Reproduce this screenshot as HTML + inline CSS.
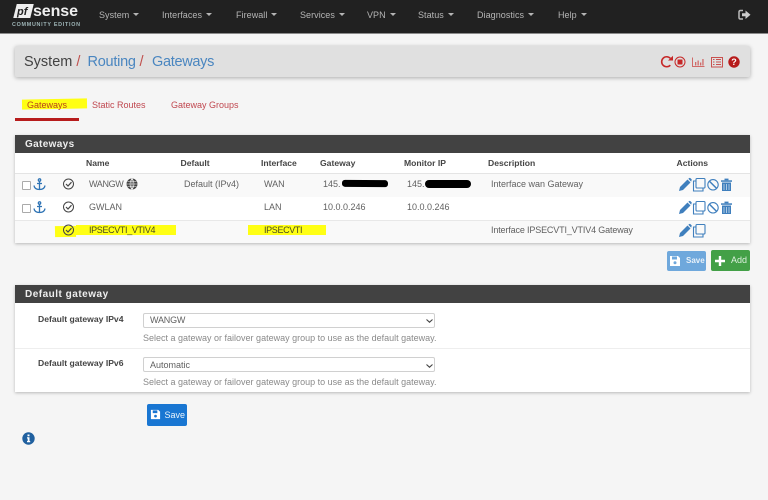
<!DOCTYPE html>
<html><head><meta charset="utf-8"><title>pfSense Gateways</title>
<style>
html,body{margin:0;padding:0;width:768px;height:500px;overflow:hidden;background:#f5f5f5;font-family:"Liberation Sans",sans-serif;color:#555}
#w{position:absolute;left:0;top:0;width:768px;height:500px;overflow:hidden;filter:blur(.35px)}
.a,.t{position:absolute}
.t{white-space:nowrap;font-size:9px;line-height:12px;color:#616161}
.b{font-weight:bold;color:#444;font-size:8.6px}
.n{color:#b5b5b5;font-size:9px;letter-spacing:.05px}
.n i{display:inline-block;width:0;height:0;border:3px solid transparent;border-top:3px solid #b5b5b5;border-bottom:0;margin-left:4px;vertical-align:2px}
.h{color:#eee;font-weight:bold;font-size:10px;letter-spacing:.5px}
.y{position:absolute;background:#ffff14}
.sel{position:absolute;left:143px;width:290px;height:13px;background:#fff;border:1px solid #d0d0d0;border-radius:2px;box-sizing:content-box}
svg{position:absolute;overflow:visible}
</style></head><body><div id="w">

<div class="a" style="left:0;top:0;width:768px;height:33px;background:#212121;border-bottom:1px solid #8a8a8a"></div>
<div class="a" style="left:15px;top:4px;width:17px;height:14px;background:#eee;transform:skewX(-14deg)"></div>
<div class="t" style="left:17px;top:6px;font:italic bold 11px/12px 'Liberation Sans',sans-serif;color:#212121">pf</div>
<div class="t" style="left:33px;top:3px;font:bold 16px/18px 'Liberation Sans',sans-serif;color:#eee;letter-spacing:-.1px">sense</div>
<div class="t" style="left:12px;top:22px;font:bold 5.4px/7px 'Liberation Sans',sans-serif;color:#9fb6b8;letter-spacing:.72px">COMMUNITY EDITION</div>
<div class="t n" style="left:99px;top:9px">System<i></i></div>
<div class="t n" style="left:162px;top:9px">Interfaces<i></i></div>
<div class="t n" style="left:236px;top:9px">Firewall<i></i></div>
<div class="t n" style="left:300px;top:9px">Services<i></i></div>
<div class="t n" style="left:367px;top:9px">VPN<i></i></div>
<div class="t n" style="left:418px;top:9px">Status<i></i></div>
<div class="t n" style="left:477px;top:9px">Diagnostics<i></i></div>
<div class="t n" style="left:558px;top:9px">Help<i></i></div>
<svg style="left:738px;top:9px" width="13" height="12" viewBox="0 0 13 12"><path d="M5 1.500H2.500Q1 1.500 1 3V8.500Q1 10 2.500 10H5" fill="none" stroke="#bbb" stroke-width="1.500"/><path d="M4 4.200H7.500V1.500L12.500 5.750 7.500 10V7.300H4Z" fill="#ccc"/></svg>

<div class="a" style="left:15px;top:46px;width:735px;height:31px;background:#e0e0e0;border-radius:2px;box-shadow:0 1px 4px rgba(0,0,0,.3)"></div>
<div class="t" style="left:24px;top:53px;font-size:14.5px;line-height:18px;color:#424242">System<span style="color:#c0504d"> /</span></div>
<div class="t" style="left:87.500px;top:53px;font-size:14.5px;line-height:18px;color:#4a86c0;letter-spacing:-.25px">Routing<span style="color:#c0504d"> /</span></div>
<div class="t" style="left:152px;top:53px;font-size:14.5px;line-height:18px;color:#4a86c0;letter-spacing:-.3px">Gateways</div>

<svg style="left:660px;top:55px" width="14" height="14" viewBox="0 0 14 14"><path d="M10.300 10.200A5 5 0 1 1 10.300 3.300" fill="none" stroke="#c62828" stroke-width="1.600"/><path d="M8 5.500H13V.8Z" fill="#c62828"/></svg>
<svg style="left:674px;top:56px" width="12" height="12" viewBox="0 0 12 12"><circle cx="6" cy="6" r="5" fill="none" stroke="#c62828" stroke-width="1"/><rect x="3.500" y="3.500" width="5" height="5" rx=".5" fill="#c62828"/></svg>
<svg style="left:692px;top:57px" width="13" height="11" viewBox="0 0 13 11"><path d="M.500 .5V9.500H12.500" fill="none" stroke="#d06a68" stroke-width="1"/><path d="M3 5H4.300V8.500H3ZM5.500 3.500H6.800V8.500H5.500ZM8 5.500H9.300V8.500H8ZM10.300 2H11.600V8.500H10.300Z" fill="#d06a68"/></svg>
<svg style="left:711px;top:57px" width="12" height="11" viewBox="0 0 12 11"><rect x=".5" y=".5" width="11" height="9.500" fill="none" stroke="#c9504e"/><path d="M2 2.500H3.500M5 2.500H10M2 5H3.500M5 5H10M2 7.500H3.500M5 7.500H10" stroke="#c9504e"/></svg>
<svg style="left:728px;top:56px" width="12" height="12" viewBox="0 0 12 12"><circle cx="6" cy="6" r="5.700" fill="#b71c1c"/><text x="6" y="9.200" text-anchor="middle" font-family="Liberation Sans" font-weight="bold" font-size="9" fill="#fff">?</text></svg>

<div class="y" style="left:22px;top:98.500px;width:65px;height:10px;transform:rotate(-1deg)"></div>
<div class="t" style="left:27px;top:99px;color:#b8401c">Gateways</div>
<div class="t" style="left:92px;top:99px;color:#c0474f">Static Routes</div>
<div class="t" style="left:171px;top:99px;color:#c0474f">Gateway Groups</div>
<div class="a" style="left:15px;top:118px;width:64px;height:3px;background:#b71c1c"></div>

<div class="a" style="left:15px;top:135px;width:735px;height:108px;background:#fff;box-shadow:0 1px 3px rgba(0,0,0,.25)"></div>
<div class="a" style="left:15px;top:135px;width:735px;height:18px;background:#424242"></div>
<div class="t h" style="left:25px;top:138px;letter-spacing:.35px;line-height:12px;margin-top:1px">Gateways</div>
<div class="a" style="left:15px;top:173px;width:735px;height:24px;background:#f9f9f9;border-top:1px solid #e4e4e4;box-sizing:border-box"></div>
<div class="a" style="left:15px;top:220px;width:735px;height:23px;background:#f9f9f9;border-top:1px solid #e8e8e8;box-sizing:border-box"></div>

<div class="t b" style="left:86px;top:157px">Name</div>
<div class="t b" style="left:180.500px;top:157px">Default</div>
<div class="t b" style="left:261px;top:157px">Interface</div>
<div class="t b" style="left:320px;top:157px">Gateway</div>
<div class="t b" style="left:404px;top:157px">Monitor IP</div>
<div class="t b" style="left:488px;top:157px">Description</div>
<div class="t b" style="left:676.500px;top:157px">Actions</div>

<div class="a" style="left:22px;top:181px;width:7px;height:7px;background:#fff;border:1px solid #aaa;border-radius:1px"></div>
<div class="a" style="left:22px;top:204px;width:7px;height:7px;background:#fff;border:1px solid #aaa;border-radius:1px"></div>
<svg style="left:33px;top:178px" width="13" height="13" viewBox="0 0 13 13"><g fill="none" stroke="#2f74b5" stroke-width="1.300"><circle cx="6.500" cy="2" r="1.200"/><path d="M6.500 3.500V11.500M4 5.500H9M1 7.500Q1.500 11.500 6.500 11.500 11.500 11.500 12 7.500"/></g></svg>
<svg style="left:33px;top:201px" width="13" height="13" viewBox="0 0 13 13"><g fill="none" stroke="#2f74b5" stroke-width="1.300"><circle cx="6.500" cy="2" r="1.200"/><path d="M6.500 3.500V11.500M4 5.500H9M1 7.500Q1.500 11.500 6.500 11.500 11.500 11.500 12 7.500"/></g></svg>

<div class="y" style="left:55px;top:226px;width:21px;height:11px;transform:rotate(-1deg)"></div>
<div class="y" style="left:76px;top:225px;width:100px;height:10px"></div>
<div class="y" style="left:248px;top:225px;width:78px;height:10px"></div>

<svg style="left:62px;top:178px" width="13" height="12" viewBox="0 0 13 12"><circle cx="6.500" cy="6" r="5" fill="none" stroke="#444" stroke-width="1"/><path d="M4 6L6 8 9.500 4.200" fill="none" stroke="#444" stroke-width="1.200"/></svg>
<svg style="left:62px;top:201px" width="13" height="12" viewBox="0 0 13 12"><circle cx="6.500" cy="6" r="5" fill="none" stroke="#444" stroke-width="1"/><path d="M4 6L6 8 9.500 4.200" fill="none" stroke="#444" stroke-width="1.200"/></svg>
<svg style="left:62px;top:224px" width="13" height="12" viewBox="0 0 13 12"><circle cx="6.500" cy="6" r="5" fill="none" stroke="#444" stroke-width="1"/><path d="M4 6L6 8 9.500 4.200" fill="none" stroke="#444" stroke-width="1.200"/></svg>

<div class="t" style="left:89px;top:178px;letter-spacing:-.35px">WANGW</div>
<svg style="left:125.500px;top:178px" width="12" height="12" viewBox="0 0 12 12"><circle cx="6" cy="6" r="5.500" fill="#424242"/><path d="M.5 6H11.500M6 .5V11.500M1.500 3.500H10.500M1.500 8.500H10.500M6 .5Q2 6 6 11.500M6 .5Q10 6 6 11.500" fill="none" stroke="#f9f9f9" stroke-width=".6"/></svg>
<div class="t" style="left:184px;top:178px">Default (IPv4)</div>
<div class="t" style="left:264px;top:178px">WAN</div>
<div class="t" style="left:323px;top:178px">145.</div>
<div class="t" style="left:407px;top:178px">145.</div>
<div class="a" style="left:342px;top:180px;width:46px;height:7px;background:#000;border-radius:3px;transform:rotate(.5deg)"></div>
<div class="a" style="left:425px;top:180px;width:46px;height:8px;background:#000;border-radius:4px"></div>
<div class="t" style="left:491px;top:178px">Interface wan Gateway</div>

<div class="t" style="left:89px;top:201px">GWLAN</div>
<div class="t" style="left:264px;top:201px">LAN</div>
<div class="t" style="left:323px;top:201px">10.0.0.246</div>
<div class="t" style="left:407px;top:201px">10.0.0.246</div>

<div class="t" style="left:89px;top:224px;color:#4a4a20;letter-spacing:-.35px">IPSECVTI_VTIV4</div>
<div class="t" style="left:264px;top:224px;color:#4a4a20;letter-spacing:-.35px">IPSECVTI</div>
<div class="t" style="left:491px;top:224px;letter-spacing:-.15px">Interface IPSECVTI_VTIV4 Gateway</div>

<svg style="left:679px;top:177.500px" width="54" height="14" viewBox="0 0 54 14"><g fill="#3f7fbd"><path d="M0 13L1 9 8.500 1.500 11.500 4.500 4 12Z"/><path d="M9.300 .8L10.300 0Q11 -.3 11.500 .2L12.600 1.300Q13 1.900 12.400 2.600L12.200 3.800Z"/></g><g fill="none" stroke="#3f7fbd" stroke-width="1.100"><rect x="17" y=".5" width="9" height="9.500" rx="1"/><path d="M17 3H14.500V13H24V10"/><circle cx="34" cy="6.800" r="5.200"/><path d="M30.300 3.100L37.700 10.500" stroke-width="1.500"/></g><g fill="#3f7fbd"><path d="M42 2.300H53V3.800H42Z"/><path d="M45.500 .6H49.500V2.300H45.500Z"/><path d="M43 4.500H52V13H43Z"/></g><path d="M45 6V12M47.500 6V12M50 6V12" stroke="#dbe8f4" stroke-width=".7"/></svg>
<svg style="left:679px;top:200.500px" width="54" height="14" viewBox="0 0 54 14"><g fill="#3f7fbd"><path d="M0 13L1 9 8.500 1.500 11.500 4.500 4 12Z"/><path d="M9.300 .8L10.300 0Q11 -.3 11.500 .2L12.600 1.300Q13 1.900 12.400 2.600L12.200 3.800Z"/></g><g fill="none" stroke="#3f7fbd" stroke-width="1.100"><rect x="17" y=".5" width="9" height="9.500" rx="1"/><path d="M17 3H14.500V13H24V10"/><circle cx="34" cy="6.800" r="5.200"/><path d="M30.300 3.100L37.700 10.500" stroke-width="1.500"/></g><g fill="#3f7fbd"><path d="M42 2.300H53V3.800H42Z"/><path d="M45.500 .6H49.500V2.300H45.500Z"/><path d="M43 4.500H52V13H43Z"/></g><path d="M45 6V12M47.500 6V12M50 6V12" stroke="#dbe8f4" stroke-width=".7"/></svg>
<svg style="left:679px;top:224px" width="28" height="14" viewBox="0 0 28 14"><g fill="#3f7fbd"><path d="M0 13L1 9 8.500 1.500 11.500 4.500 4 12Z"/><path d="M9.300 .8L10.300 0Q11 -.3 11.500 .2L12.600 1.300Q13 1.900 12.400 2.600L12.200 3.800Z"/></g><g fill="none" stroke="#3f7fbd" stroke-width="1.100"><rect x="17" y=".5" width="9" height="9.500" rx="1"/><path d="M17 3H14.500V13H24V10"/></g></svg>

<div class="a" style="left:667px;top:251px;width:39px;height:20px;background:#6fa8dc;border-radius:2px"></div>
<svg style="left:669px;top:255px" width="12" height="12" viewBox="0 0 12 12"><path d="M1 1H9L11 3V11H1Z" fill="#fff"/><rect x="3" y="1.500" width="5" height="3" fill="#6fa8dc"/><circle cx="6" cy="7.800" r="1.500" fill="#6fa8dc"/></svg>
<div class="t" style="left:686px;top:255px;color:#e8f1f9;font-size:8px;font-weight:bold">Save</div>
<div class="a" style="left:711px;top:250px;width:39px;height:21px;background:#43a047;border-radius:2px"></div>
<svg style="left:714px;top:255px" width="12" height="12" viewBox="0 0 12 12"><path d="M6 1V11M1 6H11" stroke="#fff" stroke-width="2.400"/></svg>
<div class="t" style="left:731px;top:254px;color:#dff0e0">Add</div>

<div class="a" style="left:15px;top:285px;width:735px;height:107px;background:#fff;box-shadow:0 1px 3px rgba(0,0,0,.25)"></div>
<div class="a" style="left:15px;top:285px;width:735px;height:18px;background:#424242"></div>
<div class="t h" style="left:25px;top:289px">Default gateway</div>
<div class="a" style="left:15px;top:348px;width:735px;height:1px;background:#eee"></div>

<div class="t b" style="left:38px;top:313px">Default gateway IPv4</div>
<div class="t b" style="left:38px;top:357px">Default gateway IPv6</div>
<div class="sel" style="top:313px"></div>
<div class="sel" style="top:357px"></div>
<div class="t" style="left:150px;top:314px;letter-spacing:-.2px">WANGW</div>
<div class="t" style="left:150px;top:359px">Automatic</div>
<svg style="left:426px;top:319px" width="7" height="4" viewBox="0 0 7 4"><path d="M.5 .5L3.500 3.200 6.500 .5" fill="none" stroke="#444" stroke-width="1.100"/></svg>
<svg style="left:426px;top:364px" width="7" height="4" viewBox="0 0 7 4"><path d="M.5 .5L3.500 3.200 6.500 .5" fill="none" stroke="#444" stroke-width="1.100"/></svg>
<div class="t" style="left:143px;top:332px;color:#8a8a8a">Select a gateway or failover gateway group to use as the default gateway.</div>
<div class="t" style="left:143px;top:376px;color:#8a8a8a">Select a gateway or failover gateway group to use as the default gateway.</div>

<div class="a" style="left:147px;top:404px;width:40px;height:22px;background:#1976d2;border-radius:2px"></div>
<svg style="left:150px;top:409px" width="11" height="11" viewBox="0 0 12 12"><path d="M1 1H9L11 3V11H1Z" fill="#fff"/><rect x="3" y="1.500" width="5" height="3" fill="#1976d2"/><circle cx="6" cy="7.800" r="1.500" fill="#1976d2"/></svg>
<div class="t" style="left:164.500px;top:408.500px;color:#eaf3fb">Save</div>

<svg style="left:22px;top:432px" width="13" height="13" viewBox="0 0 13 13"><circle cx="6.500" cy="6.500" r="6.200" fill="#20609f"/><path d="M5.500 2.500H7.500V4.300H5.500ZM5 5.300H7.500V9H8.200V10.300H5V9H5.700V6.500H5Z" fill="#fff"/></svg>

</div></body></html>
